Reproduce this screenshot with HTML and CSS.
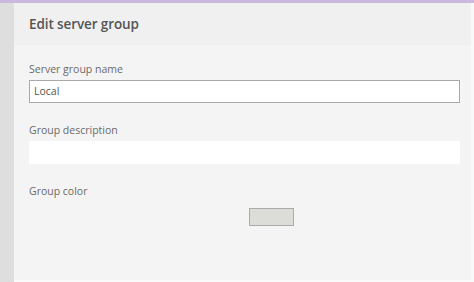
FILE: index.html
```html
<!DOCTYPE HTML>
<html lang="en">
<head>
<meta name="viewport" content="width=device-width, initial-scale=1">
<title>Edit server group</title>
<link rel="stylesheet" href="styles.css">
</head>
<body>

<div class="shell">
  <div class="side-strip"></div>
  <div class="dialog">
    <div class="dialog-header">
      <h1>Edit server group</h1>
    </div>
    <div class="dialog-body">
      <label class="field-label">Server group name</label>
      <div class="text-input bordered">Local</div>

      <label class="field-label">Group description</label>
      <div class="text-input"></div>

      <label class="field-label">Group color</label>
      <div class="color-row">
        <div class="color-swatch"></div>
      </div>
    </div>
  </div>
  <div class="right-edge"></div>
</div>

</body>
</html>
```

FILE: styles.css
```css
/* Page */
body {
  margin: 0;
  padding: 0;
  background: #f4f4f4;
  font-family: 'Open Sans', 'Noto Sans', sans-serif;
  color: #666666;
  overflow: hidden;
}

.shell {
  display: flex;
  height: 282px;
  border-top: 3px solid #cbb8df; /* purple accent line */
  box-sizing: border-box;
}

.side-strip {
  width: 14px;
  background: #dedede;
  flex-shrink: 0;
}

.right-edge {
  width: 3px;
  background: #f9f9f9;
  flex-shrink: 0;
}

/* Dialog */
.dialog {
  flex: 1;
  display: flex;
  flex-direction: column;
  background: #f4f4f4;
  border-bottom: 2px solid #fafafa;
}

.dialog-header {
  background: #f0f0f0;
  height: 42px;
  padding-left: 15px;
  display: flex;
  align-items: center;
}

h1 {
  margin: 0;
  font-size: 13.5px;
  font-weight: 600;
  color: #555555;
  letter-spacing: -0.1px;
}

.dialog-body {
  padding: 14px 11px 0 15px;
  display: flex;
  flex-direction: column;
}

.field-label {
  display: block;
  font-size: 10.5px;
  color: #6a6a6a;
  height: 16px;
  line-height: 16px;
  margin-top: 2px;
  margin-bottom: 3px;
}

.text-input {
  height: 23px;
  background: #ffffff;
  box-sizing: border-box;
  font-size: 10.5px;
  line-height: 21px;
  padding-left: 4px;
  color: #555555;
  margin-bottom: 17px;
}

.text-input.bordered {
  border: 1px solid #a9a9a9;
}

.color-row {
  display: flex;
  padding-top: 6px;
  padding-left: 220px;
}

.color-swatch {
  width: 45px;
  height: 18px;
  background: #dcddd8;
  border: 1px solid #ababab;
  box-sizing: border-box;
}
```
